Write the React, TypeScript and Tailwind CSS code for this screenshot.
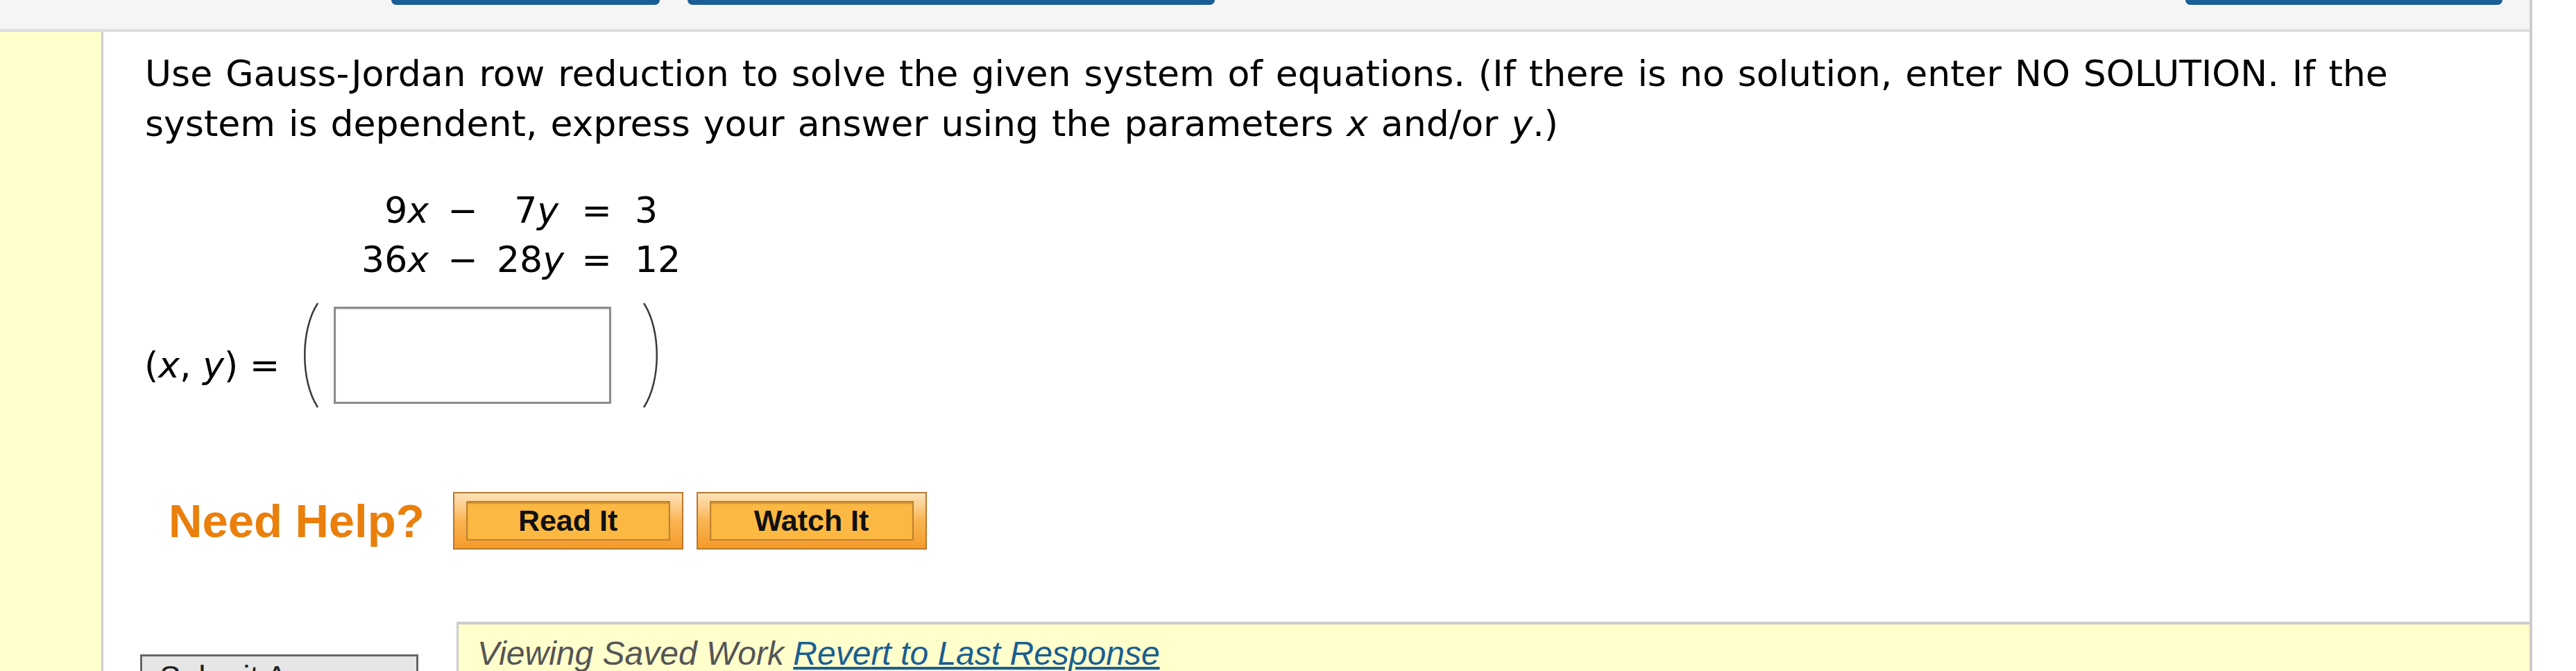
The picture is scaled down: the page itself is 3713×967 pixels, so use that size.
// WebAssign-style question panel: Gauss-Jordan system with answer box and help buttons.

function Paren({ side }: { side: "left" | "right" }) {
  const d = side === "left" ? "M28 2 C 3 40, 3 114, 28 152" : "M3 2 C 28 40, 28 114, 3 152";
  return (
    <svg width="31" height="154" viewBox="0 0 31 154" className="shrink-0">
      <path d={d} fill="none" stroke="#3a3a3a" strokeWidth="2.5" />
    </svg>
  );
}

function HelpButton({ label, ml }: { label: string; ml: string }) {
  return (
    <div
      className={`${ml} w-[332px] h-[83px] border-2 border-[#b9772f] bg-gradient-to-b from-[#fde2b8] via-[#f9b550] to-[#f59a2a] flex items-center justify-center px-[17px]`}
    >
      <div className="w-full h-[57px] border-2 border-[#c2812f] bg-[#fbb943] shadow-[inset_0_2px_2px_rgba(120,70,10,0.35)] flex items-center justify-center">
        <span className="font-['Liberation_Sans',Arial,sans-serif] font-bold text-[43px] leading-none text-[#111]">
          {label}
        </span>
      </div>
    </div>
  );
}

export default function App() {
  return (
    <div className="h-[967px] w-[3713px] overflow-hidden bg-white">
      <div className="w-[3650px] h-full border-r-[4px] border-[#cccccc] flex flex-col">
        {/* ── Top bar with tab stubs ─────────────────────────────────── */}
        <div className="h-[46px] shrink-0 bg-[#f5f5f5] border-b-[4px] border-[#dddddd] flex items-start">
          <div className="ml-[564px] w-[387px] h-[7px] rounded-b-[7px] bg-[#1b5e95]" />
          <div className="ml-[40px] w-[760px] h-[7px] rounded-b-[7px] bg-[#1b5e95]" />
          <div className="ml-auto mr-[39px] w-[457px] h-[7px] rounded-b-[7px] bg-[#1b5e95]" />
        </div>

        <div className="flex flex-1">
          {/* ── Left yellow strip ──────────────────────────────────────── */}
          <div className="w-[149px] shrink-0 bg-[#ffffcc] border-r-[3px] border-[#cccccc]" />

          {/* ── Question body ──────────────────────────────────────────── */}
          <div className="flex-1 flex flex-col">
            <p className="pl-[60px] pr-[40px] pt-[24px] font-['DejaVu_Sans',Verdana,sans-serif] text-[52px] leading-[72px] [word-spacing:2.5px] text-black">
              Use Gauss-Jordan row reduction to solve the given system of equations. (If there is no solution, enter NO
              SOLUTION. If the system is dependent, express your answer using the parameters <i>x</i> and/or <i>y</i>.)
            </p>

            {/* Equations */}
            <div className="mt-[54px] ml-[353px] font-['DejaVu_Sans',Verdana,sans-serif] text-[52px] leading-[71px] text-black">
              <div className="grid grid-cols-[116px_98px_89px_110px_auto]">
                <span className="text-right">
                  9<i>x</i>
                </span>
                <span className="text-center">−</span>
                <span className="text-right">
                  7<i>y</i>
                </span>
                <span className="text-center">=</span>
                <span>3</span>
                <span className="text-right">
                  36<i>x</i>
                </span>
                <span className="text-center">−</span>
                <span className="text-right">
                  28<i>y</i>
                </span>
                <span className="text-center">=</span>
                <span>12</span>
              </div>
            </div>

            {/* Answer row */}
            <div className="mt-[25px] ml-[59px] flex items-center">
              <span className="mt-[28px] font-['DejaVu_Sans',Verdana,sans-serif] text-[52px] leading-[72px] text-black">
                (<i>x</i>, <i>y</i>) =
              </span>
              <div className="ml-[27px]">
                <Paren side="left" />
              </div>
              <div className="ml-[20px] w-[400px] h-[140px] border-[3px] border-[#8c8c8c] bg-white shadow-[inset_0_1px_2px_rgba(0,0,0,0.15)]" />
              <div className="ml-[44px]">
                <Paren side="right" />
              </div>
            </div>

            {/* Need help row */}
            <div className="mt-[120px] ml-[94px] flex items-center">
              <span className="font-['Liberation_Sans',Arial,sans-serif] font-bold text-[67px] leading-[67px] text-[#ea7f0c]">
                Need Help?
              </span>
              <HelpButton label="Read It" ml="ml-[41px]" />
              <HelpButton label="Watch It" ml="ml-[19px]" />
            </div>

            {/* Submit + saved work notice */}
            <div className="mt-[104px] ml-[53px] flex items-start">
              <div className="mt-[47px] w-[401px] h-[90px] shrink-0 border-[3px] border-[#666666] bg-[#e6e6e6] pl-[25px] pt-[7px]">
                <span className="font-['Liberation_Sans',Arial,sans-serif] text-[46px] leading-[46px] text-[#222]">
                  Submit Answer
                </span>
              </div>
              <div className="ml-[55px] flex-1 h-[120px] bg-[#ffffcc] border-t-[4px] border-l-[3px] border-[#cccccc] pl-[27px] pt-[6px]">
                <span className="font-['Liberation_Sans',Arial,sans-serif] italic text-[48px] text-[#555555]">
                  Viewing Saved Work{" "}
                  <a href="#" className="underline text-[#1a5e8f]">
                    Revert to Last Response
                  </a>
                </span>
              </div>
            </div>
          </div>
        </div>
      </div>
    </div>
  );
}
